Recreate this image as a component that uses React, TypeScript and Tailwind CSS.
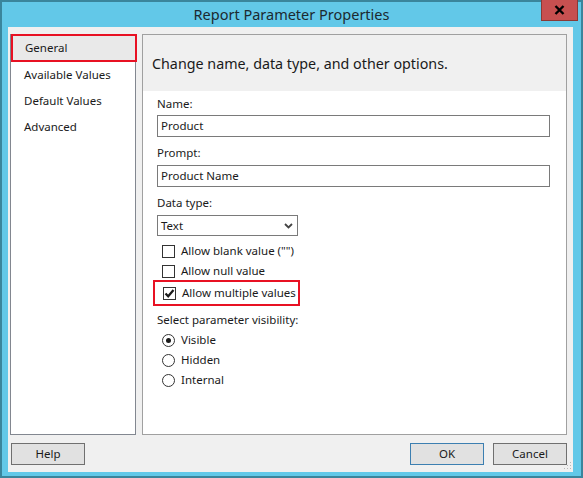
import React from "react";

const FONT = { fontFamily: '"Noto Sans", "Open Sans", sans-serif' };

function Check() {
  return (
    <svg width="11" height="11" viewBox="0 0 11 11">
      <path d="M1.5 5.5 4.2 8.3 9.5 2" fill="none" stroke="#1a1a1a" strokeWidth="2.2" />
    </svg>
  );
}

function CheckRow({ label, checked }: { label: string; checked?: boolean }) {
  return (
    <div className="flex h-5 items-center gap-[6px] whitespace-nowrap pl-[5px]">
      <span className="grid h-[13px] w-[13px] shrink-0 place-items-center border border-[#333] bg-white">
        {checked && <Check />}
      </span>
      <span>{label}</span>
    </div>
  );
}

function RadioRow({ label, on }: { label: string; on?: boolean }) {
  return (
    <div className="flex h-5 items-center gap-[6px] pl-[5px]">
      <span className="grid h-[13px] w-[13px] place-items-center rounded-full border border-[#333] bg-white">
        {on && <span className="h-[5px] w-[5px] rounded-full bg-[#1a1a1a]" />}
      </span>
      <span>{label}</span>
    </div>
  );
}

function Button({ label, primary }: { label: string; primary?: boolean }) {
  return (
    <div
      className={`grid h-[22px] w-[74px] place-items-center border bg-[#e1e1e1] ${
        primary ? "border-[#3c7fb1]" : "border-[#707070]"
      }`}
    >
      {label}
    </div>
  );
}

export default function App() {
  const nav = ["General", "Available Values", "Default Values", "Advanced"];
  return (
    <div
      className="flex h-[478px] w-[583px] flex-col border-2 border-[#3a859c] bg-[#62c8e8] text-[11.5px] text-[#1a1a1a]"
      style={FONT}
    >
      {/* title bar */}
      <div className="relative flex h-[25px] shrink-0 items-center justify-center">
        <span className="text-[14.5px] text-[#1c2a30]">Report Parameter Properties</span>
        <div className="absolute right-[3px] top-[-2px] grid h-[21px] w-[37px] place-items-center border border-t-0 border-[#8a3a36] bg-[#c75050]">
          <svg width="11" height="10" viewBox="0 0 11 10">
            <path d="M1.5 1 9.5 9M9.5 1 1.5 9" stroke="#000" strokeWidth="2.4" />
          </svg>
        </div>
      </div>

      {/* client */}
      <div className="mb-[4px] ml-[6px] mr-[8px] flex flex-1 flex-col bg-[#f0f0f0] pl-[2px] pr-[6px] pt-[7px]">
        <div className="flex h-[401px] gap-[6px]">
          {/* left list */}
          <div className="w-[126px] shrink-0 border border-[#828790] bg-white">
            {nav.map((n, i) => (
              <div
                key={n}
                className={
                  i === 0
                    ? "-mr-[2px] -mt-px flex h-[28px] items-center border-2 border-[#e81123] bg-[#e9e9e9] pl-[12px]"
                    : "flex h-[26px] items-center pl-[13px]"
                }
              >
                {n}
              </div>
            ))}
          </div>

          {/* right panel */}
          <div className="flex flex-1 flex-col border border-[#a0a0a0] bg-white">
            <div className="flex h-[56px] items-center bg-[#f0f0f0] pl-[9px] pt-px text-[14.3px]">
              Change name, data type, and other options.
            </div>
            <div className="flex flex-col pl-[14px] pr-[16px] pt-[5px]">
              <div className="h-4 leading-4">Name:</div>
              <div className="mt-[3px] flex h-[22px] items-center border border-[#7a7a7a] px-[3px]">Product</div>
              <div className="mt-[8px] h-4 leading-4">Prompt:</div>
              <div className="mt-[4px] flex h-[22px] items-center border border-[#7a7a7a] px-[3px]">Product Name</div>
              <div className="mt-[8px] h-4 leading-4">Data type:</div>
              <div className="mt-[4px] flex h-[21px] w-[141px] items-center justify-between border border-[#7a7a7a] pl-[3px] pr-[4px]">
                <span>Text</span>
                <svg width="9" height="6" viewBox="0 0 9 6">
                  <path d="M1 1 4.5 4.5 8 1" fill="none" stroke="#444" strokeWidth="1.8" />
                </svg>
              </div>
              <div className="mt-[5px] flex flex-col">
                <CheckRow label={'Allow blank value ("")'} />
                <CheckRow label="Allow null value" />
                <div className="-ml-[4px] mt-[-1px] w-[147px] border-2 border-[#e81123] py-px pl-[3px]">
                  <CheckRow label="Allow multiple values" checked />
                </div>
              </div>
              <div className="mt-[6px] h-4 leading-4">Select parameter visibility:</div>
              <div className="mt-[2px] flex flex-col">
                <RadioRow label="Visible" on />
                <RadioRow label="Hidden" />
                <RadioRow label="Internal" />
              </div>
            </div>
          </div>
        </div>

        {/* buttons */}
        <div className="relative mt-[8px] flex items-start pl-px">
          <Button label="Help" />
          <div className="ml-auto flex gap-[9px]">
            <Button label="OK" primary />
            <Button label="Cancel" />
          </div>
          <svg className="absolute -right-[5px] top-[19px]" width="8" height="8" viewBox="0 0 8 8">
            <g fill="#b8b8b8">
              <rect x="6" y="0" width="1" height="1" />
              <rect x="3" y="3" width="1" height="1" />
              <rect x="6" y="3" width="1" height="1" />
              <rect x="0" y="6" width="1" height="1" />
              <rect x="3" y="6" width="1" height="1" />
              <rect x="6" y="6" width="1" height="1" />
            </g>
          </svg>
        </div>
      </div>
    </div>
  );
}
